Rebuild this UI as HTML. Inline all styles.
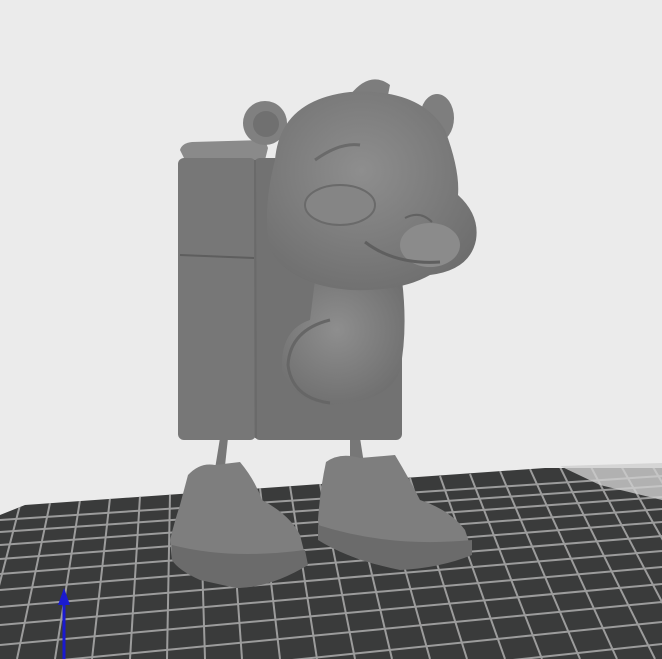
<!DOCTYPE html>
<html><head><style>html,body{margin:0;padding:0;background:#ebebeb;width:662px;height:659px;overflow:hidden}svg{display:block}</style></head>
<body>
<svg width="662" height="659" viewBox="0 0 662 659" xmlns="http://www.w3.org/2000/svg">
<defs>
<radialGradient id="g" cx="0.45" cy="0.4" r="0.7"><stop offset="0" stop-color="#8e8e8e"/><stop offset="1" stop-color="#6c6c6c"/></radialGradient>
<clipPath id="fc"><polygon points="0,515 25,505 545,468 662,468 662,659 0,659"/></clipPath>
</defs>
<rect width="662" height="659" fill="#ebebeb"/>
<polygon points="0,515 25,505 545,468 662,468 662,659 0,659" fill="#3a3b3b"/>
<g clip-path="url(#fc)" stroke="#9c9c9c" stroke-width="2">
<line x1="0" y1="520" x2="662" y2="476"/>
<line x1="0" y1="532" x2="662" y2="486"/>
<line x1="0" y1="545" x2="662" y2="497"/>
<line x1="0" y1="559" x2="662" y2="509"/>
<line x1="0" y1="574" x2="662" y2="522"/>
<line x1="0" y1="590" x2="662" y2="536"/>
<line x1="0" y1="607" x2="662" y2="551"/>
<line x1="0" y1="625" x2="662" y2="567"/>
<line x1="0" y1="645" x2="662" y2="584"/>
<line x1="0" y1="666" x2="662" y2="602"/>
<line x1="0" y1="690" x2="662" y2="622"/>
<line x1="0" y1="715" x2="662" y2="644"/>
<line x1="-40" y1="509" x2="-95" y2="659"/>
<line x1="-10" y1="507" x2="-58" y2="659"/>
<line x1="20" y1="505" x2="-20" y2="659"/>
<line x1="50" y1="503" x2="17" y2="659"/>
<line x1="80" y1="500" x2="55" y2="659"/>
<line x1="110" y1="498" x2="92" y2="659"/>
<line x1="140" y1="496" x2="130" y2="659"/>
<line x1="170" y1="494" x2="167" y2="659"/>
<line x1="200" y1="492" x2="205" y2="659"/>
<line x1="230" y1="490" x2="242" y2="659"/>
<line x1="260" y1="488" x2="280" y2="659"/>
<line x1="290" y1="486" x2="317" y2="659"/>
<line x1="320" y1="484" x2="355" y2="659"/>
<line x1="350" y1="482" x2="392" y2="659"/>
<line x1="380" y1="480" x2="430" y2="659"/>
<line x1="410" y1="478" x2="467" y2="659"/>
<line x1="440" y1="476" x2="505" y2="659"/>
<line x1="470" y1="474" x2="542" y2="659"/>
<line x1="500" y1="471" x2="580" y2="659"/>
<line x1="530" y1="469" x2="617" y2="659"/>
<line x1="560" y1="467" x2="655" y2="659"/>
<line x1="590" y1="465" x2="692" y2="659"/>
<line x1="620" y1="464" x2="730" y2="659"/>
<line x1="650" y1="462" x2="767" y2="659"/>
</g>
<polygon points="560,466 662,463 662,500 600,485" fill="#cfcfcf" opacity="0.8"/>
<line x1="64" y1="600" x2="64" y2="659" stroke="#1a1ad0" stroke-width="3"/>
<polygon points="58,605 70,605 64,588" fill="#1a1ad0"/>
<path d="M220,438 L228,438 L224,475 L214,475 Z" fill="#777"/>
<path d="M350,438 L360,438 L365,470 L350,470 Z" fill="#777"/>
<path d="M188,475 Q200,462 215,465 L240,462 Q255,480 262,500 Q290,515 300,535 L305,555 Q270,585 235,585 Q205,580 172,560 L170,540 Q175,520 180,505 Z" fill="#7e7e7e"/>
<path d="M172,545 Q230,560 305,550 L308,565 Q270,588 236,588 L200,580 Q178,570 172,560 Z" fill="#6b6b6b"/>
<path d="M326,462 Q340,452 360,458 L395,455 Q410,480 420,500 Q450,510 465,530 L470,545 Q440,565 400,568 Q360,565 320,540 L318,520 Q320,490 326,462 Z" fill="#7e7e7e"/>
<path d="M318,525 Q390,548 472,540 L472,555 Q440,568 400,570 Q350,560 318,540 Z" fill="#6b6b6b"/>
<path d="M180,150 Q182,143 192,142 L265,140 L268,148 L265,160 L185,160 Z" fill="#8a8a8a"/>
<rect x="178" y="158" width="78" height="282" rx="6" fill="#777"/>
<rect x="254" y="158" width="148" height="282" rx="6" fill="#727272"/>
<line x1="180" y1="255" x2="254" y2="258" stroke="#5e5e5e" stroke-width="2"/>
<line x1="255" y1="160" x2="256" y2="438" stroke="#6a6a6a" stroke-width="2"/>
<circle cx="265" cy="123" r="22" fill="#808080"/>
<circle cx="266" cy="124" r="13" fill="#707070"/>
<ellipse cx="437" cy="118" rx="17" ry="24" fill="#7e7e7e"/>
<path d="M350,95 Q370,70 390,85 L385,110 L355,110 Z" fill="#7d7d7d"/>
<path d="M315,280 L402,280 Q408,330 400,370 Q390,402 330,405 Q290,400 282,370 Q280,330 310,320 Z" fill="url(#g)"/>
<path d="M330,320 Q290,330 288,365 Q292,398 330,403" fill="none" stroke="#666" stroke-width="3"/>
<path d="M275,160 Q280,100 350,92 Q420,88 445,130 Q460,170 458,195 Q480,215 476,240 Q470,270 430,275 Q400,292 350,290 Q290,285 270,250 Q262,210 275,160 Z" fill="url(#g)"/>
<ellipse cx="340" cy="205" rx="35" ry="20" fill="#858585" stroke="#6a6a6a" stroke-width="2"/>
<path d="M315,160 Q340,142 360,145" fill="none" stroke="#6a6a6a" stroke-width="3"/>
<path d="M405,218 Q420,210 432,222" fill="none" stroke="#626262" stroke-width="2"/>
<ellipse cx="430" cy="245" rx="30" ry="22" fill="#8b8b8b"/>
<path d="M365,242 Q395,265 440,262" fill="none" stroke="#5f5f5f" stroke-width="3"/>
</svg>
</body></html>
